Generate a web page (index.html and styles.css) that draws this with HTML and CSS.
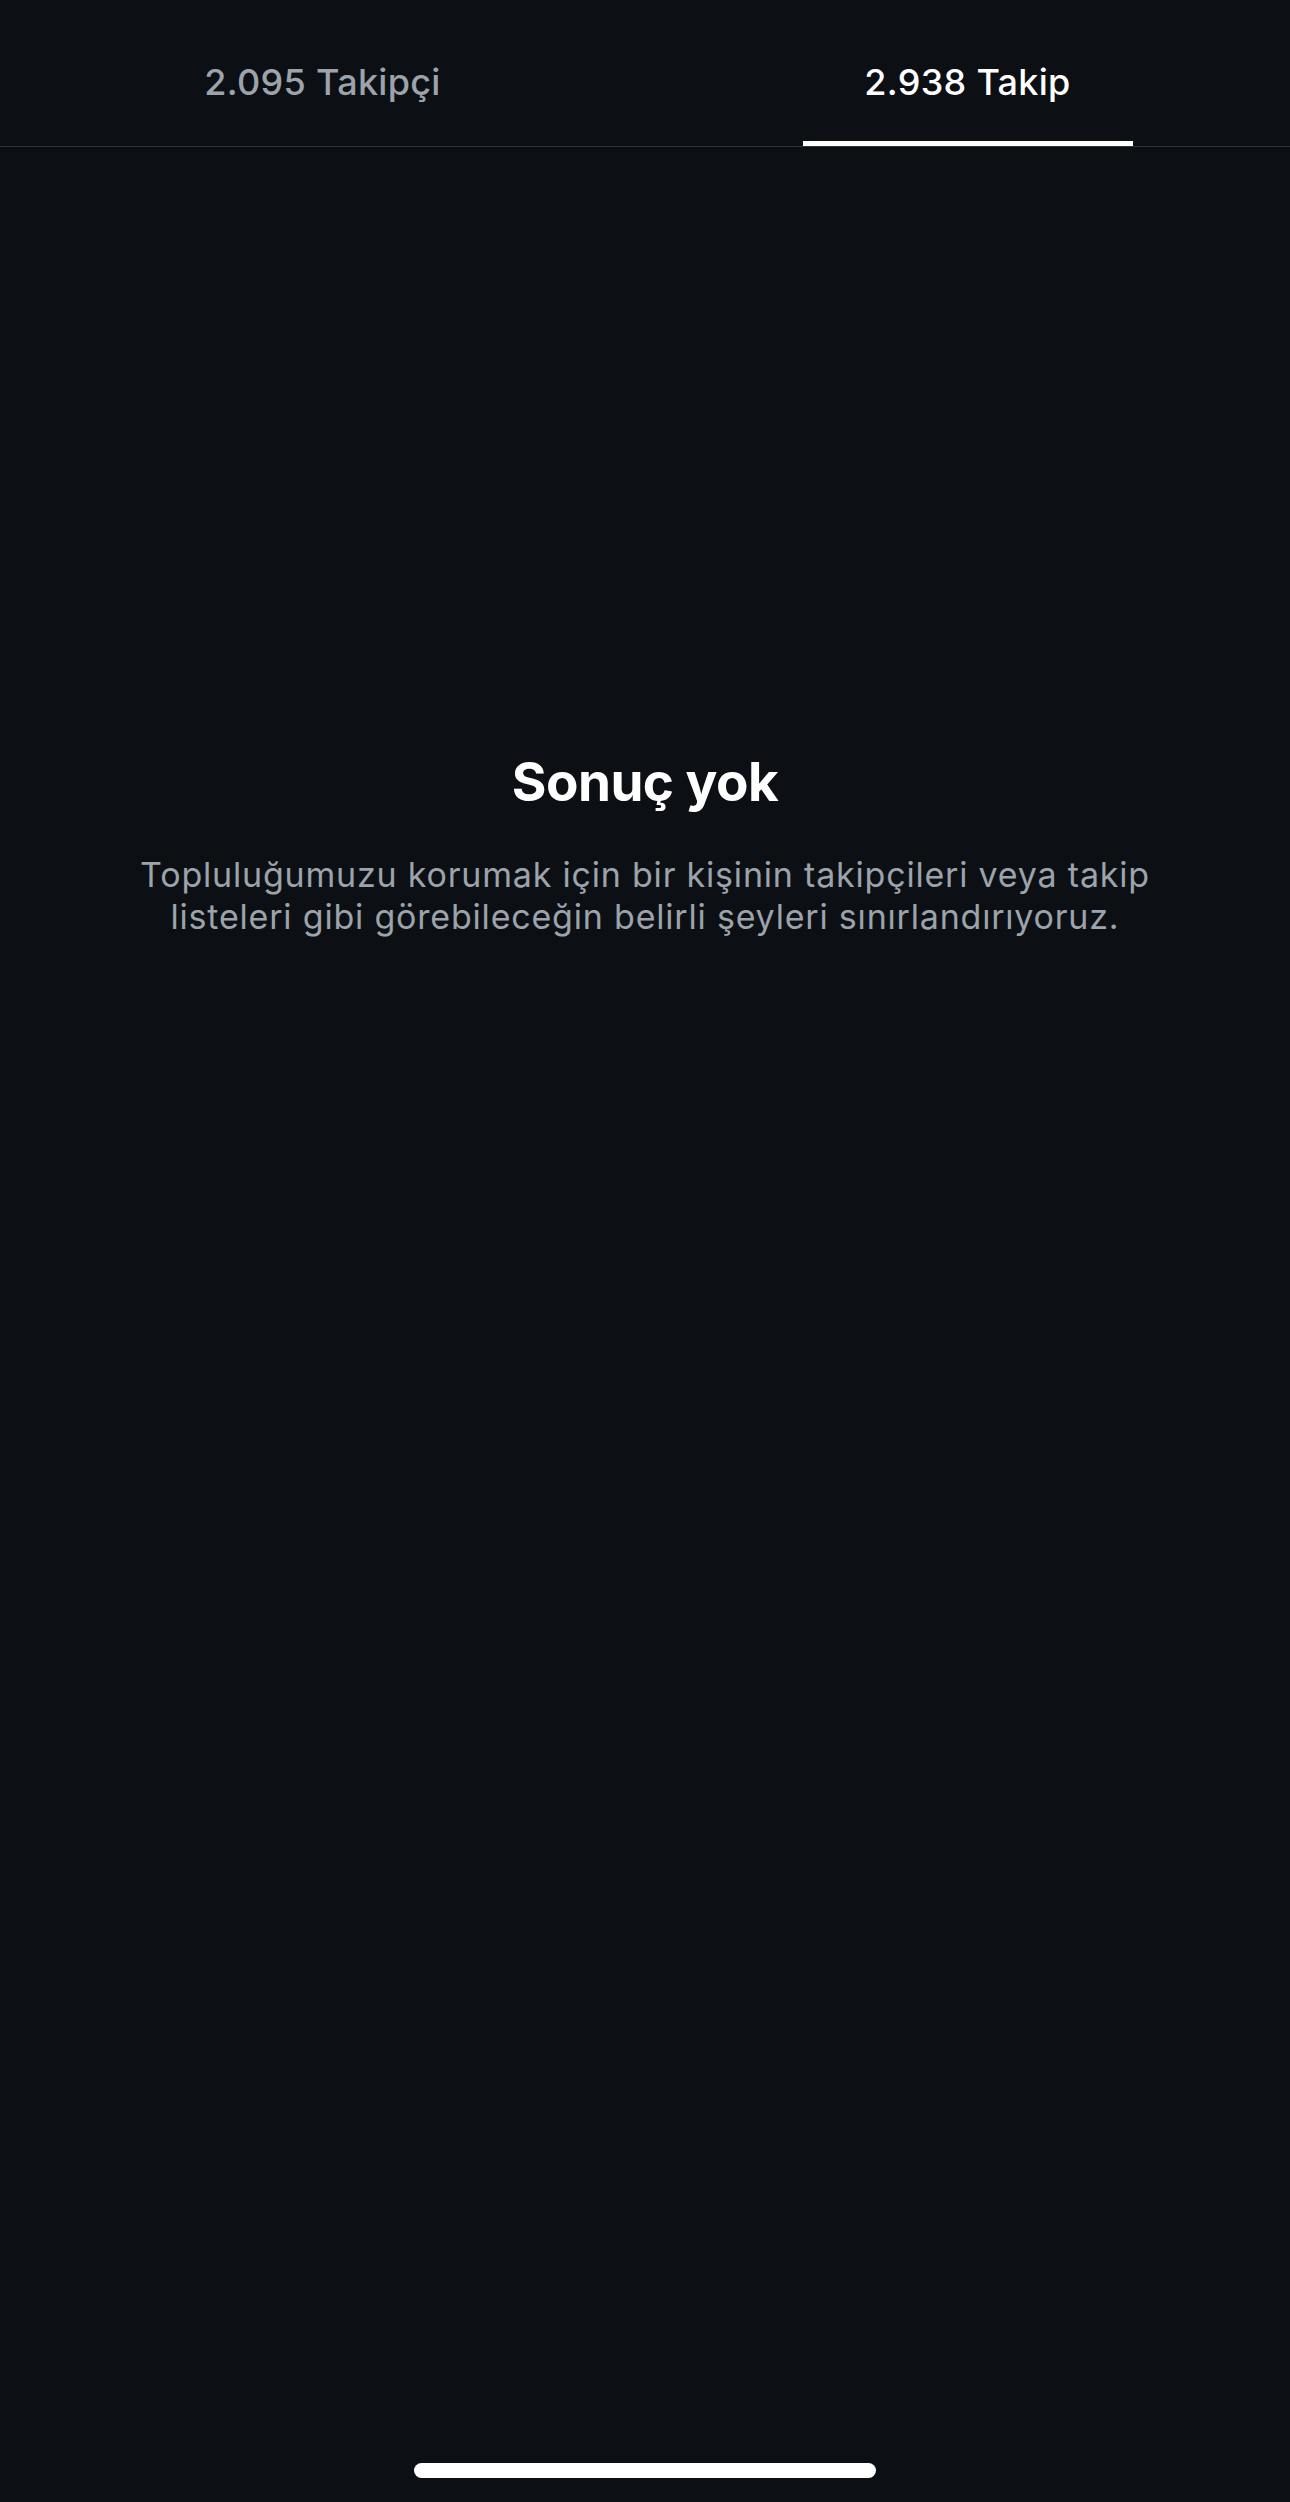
FILE: index.html
```html
<!DOCTYPE html>
<html lang="tr">
<head>
<meta charset="utf-8">
<title>Takip</title>
<link rel="stylesheet" href="styles.css">
</head>
<body>
<div class="screen">
  <nav class="tabs">
    <div class="tab">
      <span class="tab-label">2.095 Takipçi</span>
    </div>
    <div class="tab tab-active">
      <span class="tab-label">2.938 Takip</span>
      <span class="tab-indicator"></span>
    </div>
  </nav>
  <main class="empty">
    <h1 class="empty-title">Sonuç yok</h1>
    <p class="empty-text">Topluluğumuzu korumak için bir kişinin takipçileri veya takip listeleri gibi görebileceğin belirli şeyleri sınırlandırıyoruz.</p>
  </main>
  <div class="home-bar"><span class="home-indicator"></span></div>
</div>
</body>
</html>
```

FILE: styles.css
```css
html, body {
  margin: 0;
  padding: 0;
  background: #0c1014;
}
body {
  font-family: Inter, "Noto Sans", "Liberation Sans", sans-serif;
  color: #ffffff;
}
.screen {
  display: flex;
  flex-direction: column;
  min-height: 2502px;
}
.tabs {
  display: flex;
  height: 146px;
  border-bottom: 1px solid #2f3336;
}
.tab {
  flex: 1;
  display: flex;
  flex-direction: column;
  align-items: center;
  padding-top: 60px;
}
.tab-label {
  font-size: 36px;
  line-height: 44px;
  font-weight: 500;
  color: #9ca3ab;
  letter-spacing: 0.3px;
}
.tab-active .tab-label {
  color: #ffffff;
}
.tab-indicator {
  margin-top: auto;
  width: 330px;
  height: 5px;
  background: #ffffff;
}
.empty {
  display: flex;
  flex-direction: column;
  align-items: center;
  padding: 0 100px;
  margin-top: 603px;
}
.empty-title {
  margin: 0;
  font-size: 53px;
  line-height: 64px;
  font-weight: 700;
  color: #ffffff;
  letter-spacing: -0.5px;
}
.empty-text {
  margin: 40px 0 0;
  max-width: 1070px;
  font-size: 34px;
  line-height: 42px;
  font-weight: 400;
  color: #9ca3ab;
  text-align: center;
  letter-spacing: 0.8px;
}
.home-bar {
  margin-top: auto;
  display: flex;
  justify-content: center;
  padding-bottom: 24px;
}
.home-indicator {
  width: 462px;
  height: 15px;
  border-radius: 8px;
  background: #ffffff;
}
```
